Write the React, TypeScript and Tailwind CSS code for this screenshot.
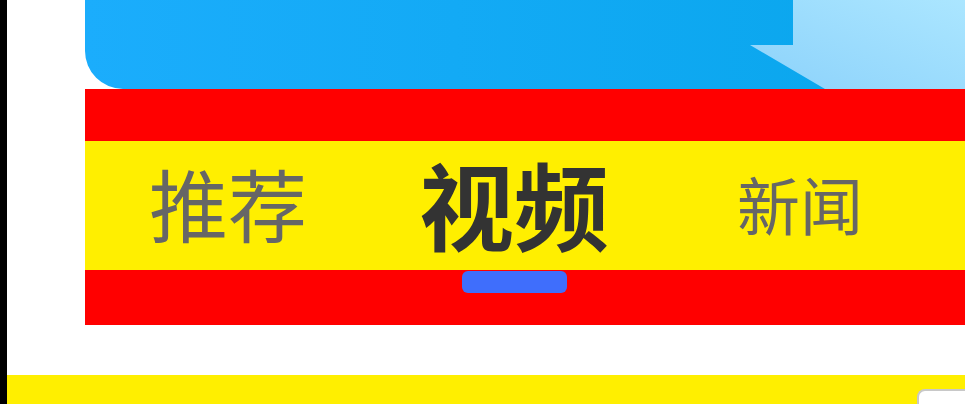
const TABS = [
  { label: "推荐", active: false, size: "text-[79px]" },
  { label: "视频", active: true, size: "text-[95px]" },
  { label: "新闻", active: false, size: "text-[63px]" },
];

function Banner() {
  return (
    <svg width="880" height="89" viewBox="0 0 880 89" className="block">
      <defs>
        <linearGradient id="bannerDark" x1="0" y1="0" x2="1" y2="0">
          <stop offset="0" stopColor="#1badfc" />
          <stop offset="1" stopColor="#0ba7ee" />
        </linearGradient>
        <linearGradient id="bannerLight" x1="0" y1="1" x2="1" y2="0">
          <stop offset="0" stopColor="#8cd2fb" />
          <stop offset="1" stopColor="#abe6ff" />
        </linearGradient>
      </defs>
      <rect x="665" y="0" width="215" height="89" fill="url(#bannerLight)" />
      <path
        d="M0 0 H708 V45 H665 L740 89 H38 A38 38 0 0 1 0 51 Z"
        fill="url(#bannerDark)"
      />
    </svg>
  );
}

export default function App() {
  return (
    <div
      className="flex h-[404px] w-[965px] overflow-hidden bg-white"
      style={{ fontFamily: '"Noto Sans CJK SC", "Noto Sans", sans-serif' }}
    >
      <div className="w-[7px] shrink-0 bg-black" />
      <div className="flex min-w-0 flex-1 flex-col">
        <div className="pl-[78px]">
          <Banner />
          <div className="h-[52px] w-[880px] bg-[#ff0000]" />
          <div className="flex h-[129px] w-[880px] items-center bg-[#ffef00] pb-[6px]">
            {TABS.map((tab) => (
              <div
                key={tab.label}
                className="flex w-[286px] shrink-0 items-center justify-center"
              >
                <span
                  className={
                    tab.active
                      ? `${tab.size} font-bold leading-none text-[#333333]`
                      : `${tab.size} font-normal leading-none text-[#666666]`
                  }
                >
                  {tab.label}
                </span>
              </div>
            ))}
          </div>
          <div className="flex h-[55px] w-[880px] bg-[#ff0000]">
            {TABS.map((tab) => (
              <div key={tab.label} className="flex w-[286px] shrink-0 justify-center">
                {tab.active ? (
                  <div className="mt-px h-[22px] w-[105px] rounded-md bg-[#3f6efc]" />
                ) : null}
              </div>
            ))}
          </div>
        </div>
        <div className="h-[50px]" />
        <div className="flex h-[29px] items-end justify-end bg-[#ffef00]">
          <div className="h-[15px] w-[48px] rounded-tl-lg border-l-2 border-t-2 border-[#c8c8c8] bg-white" />
        </div>
      </div>
    </div>
  );
}
